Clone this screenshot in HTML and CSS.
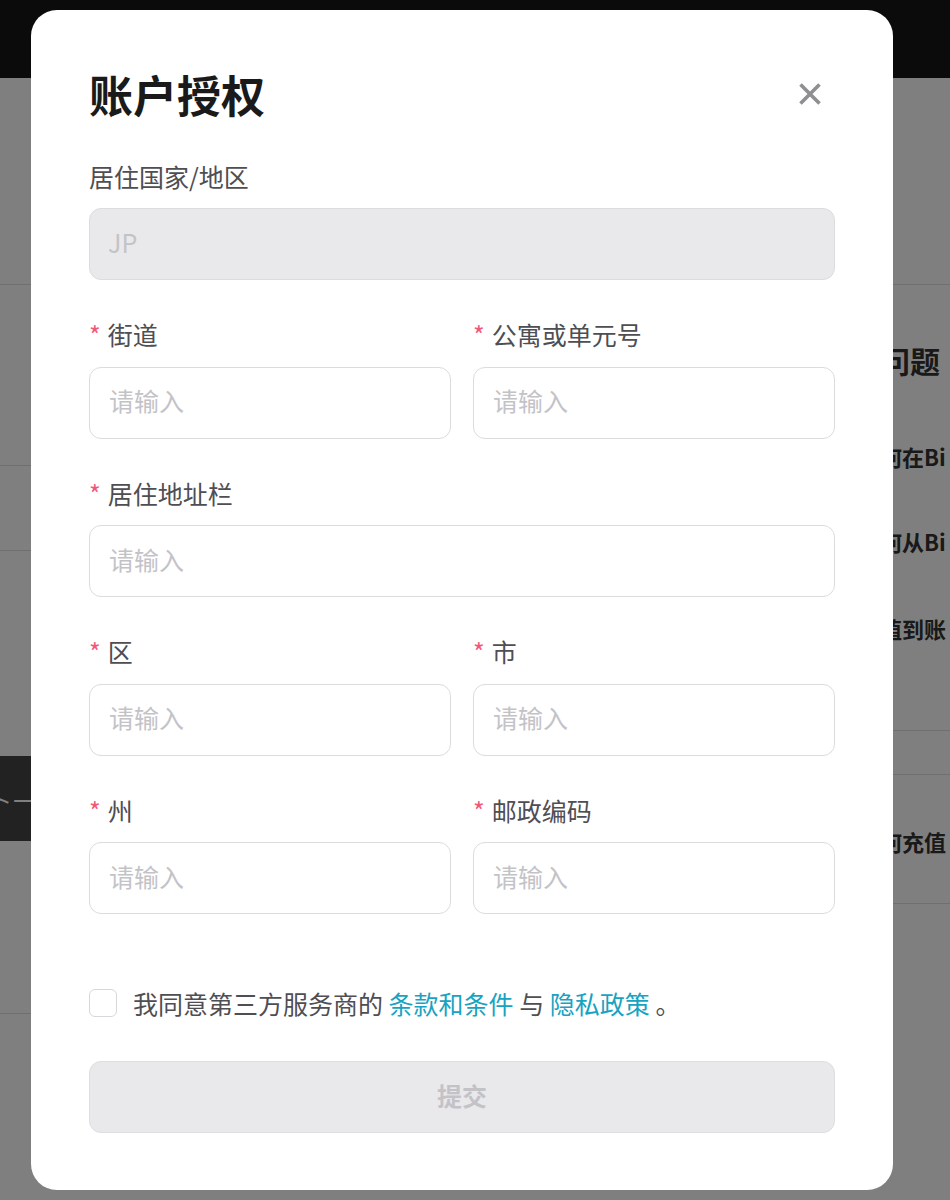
FILE: index.html
```html
<!DOCTYPE html>
<html lang="zh-CN">
<head>
<meta charset="utf-8">
<title>账户授权</title>
<link rel="stylesheet" href="styles.css">
</head>
<body>
<div class="page">
  <div class="topbar"></div>
  <div class="hero"></div>
  <div class="cols">
    <div class="left-col">
      <div class="lblock lblock-a"></div>
      <div class="lblock lblock-b"></div>
      <div class="dark-btn"><span class="dark-btn-text">トー</span></div>
      <div class="lblock lblock-c"></div>
    </div>
    <div class="right-col">
      <div class="faq-title">常见问题</div>
      <div class="faq-item faq-item-1">如何在Bi</div>
      <div class="faq-item faq-item-2">如何从Bi</div>
      <div class="faq-item faq-item-3">充值到账</div>
      <div class="faq-sep"></div>
      <div class="faq-item faq-item-4">如何充值</div>
    </div>
  </div>
</div>

<div class="overlay">
  <div class="modal">
    <div class="modal-head">
      <h2 class="modal-title">账户授权</h2>
      <button class="close" type="button" aria-label="关闭">
        <svg width="22" height="22" viewBox="0 0 22 22"><path d="M1.5 1.5 L20.5 20.5 M20.5 1.5 L1.5 20.5" stroke="#8e8e93" stroke-width="3.6" fill="none"/></svg>
      </button>
    </div>

    <div class="field">
      <label class="label">居住国家/地区</label>
      <input class="input" type="text" value="JP" disabled>
    </div>

    <div class="row">
      <div class="field">
        <label class="label"><span class="req">*</span>街道</label>
        <input class="input" type="text" placeholder="请输入">
      </div>
      <div class="field">
        <label class="label"><span class="req">*</span>公寓或单元号</label>
        <input class="input" type="text" placeholder="请输入">
      </div>
    </div>

    <div class="field">
      <label class="label"><span class="req">*</span>居住地址栏</label>
      <input class="input" type="text" placeholder="请输入">
    </div>

    <div class="row">
      <div class="field">
        <label class="label"><span class="req">*</span>区</label>
        <input class="input" type="text" placeholder="请输入">
      </div>
      <div class="field">
        <label class="label"><span class="req">*</span>市</label>
        <input class="input" type="text" placeholder="请输入">
      </div>
    </div>

    <div class="row row-last">
      <div class="field">
        <label class="label"><span class="req">*</span>州</label>
        <input class="input" type="text" placeholder="请输入">
      </div>
      <div class="field">
        <label class="label"><span class="req">*</span>邮政编码</label>
        <input class="input" type="text" placeholder="请输入">
      </div>
    </div>

    <div class="agree">
      <span class="checkbox"></span>
      <p class="agree-text">我同意第三方服务商的 <a class="link" href="#">条款和条件</a> 与 <a class="link" href="#">隐私政策</a> 。</p>
    </div>

    <button class="submit" type="button">提交</button>
  </div>
</div>
</body>
</html>
```

FILE: styles.css
```css
* { box-sizing: border-box; }

html, body {
  margin: 0;
  padding: 0;
  width: 950px;
  height: 1200px;
  overflow: hidden;
  background: #ffffff;
  font-family: "Noto Sans CJK SC", "Noto Sans", sans-serif;
}

/* ---------- background page ---------- */
.page {
  width: 950px;
  height: 1200px;
  overflow: hidden;
  background: #ffffff;
  color: #333333;
}

.topbar {
  height: 78px;
  background: #161616;
}

.hero {
  height: 207px;
  border-bottom: 1px solid #dedede;
}

.cols {
  display: flex;
  width: 950px;
  overflow: hidden;
}

.left-col {
  width: 820px;
  flex: none;
}

.lblock {
  border-bottom: 1px solid #dedede;
}

.lblock-a { height: 181px; }
.lblock-b { height: 85px; }
.lblock-c { height: 173px; }

.dark-btn {
  margin-top: 205px;
  height: 85px;
  width: 31px;
  background: #444444;
  display: flex;
  align-items: center;
  overflow: hidden;
}

.dark-btn-text {
  margin-left: -10px;
  color: #ffffff;
  font-size: 22px;
  line-height: 30px;
  white-space: nowrap;
}

.right-col {
  flex: none;
  width: 130px;
  overflow: hidden;
  color: #333333;
  font-weight: 700;
  white-space: nowrap;
}

.faq-title {
  margin-top: 55px;
  height: 40px;
  line-height: 40px;
  font-size: 30px;
}

.faq-item {
  height: 30px;
  line-height: 30px;
  font-size: 22px;
  padding-left: 38px;
}

.faq-item-1 { margin-top: 61px; }
.faq-item-2 { margin-top: 55px; }
.faq-item-3 { margin-top: 57px; }

.faq-sep {
  margin-top: 87px;
  height: 45px;
  border-top: 1px solid #dedede;
  border-bottom: 1px solid #dedede;
}

.faq-item-4 {
  height: auto;
  padding-top: 51px;
  padding-bottom: 47px;
  border-bottom: 1px solid #dedede;
}

/* ---------- overlay + modal ---------- */
.overlay {
  position: fixed;
  inset: 0;
  background: rgba(0, 0, 0, 0.5);
  display: flex;
  align-items: flex-start;
  padding: 10px 0 0 31px;
}

.modal {
  width: 862px;
  background: #ffffff;
  border-radius: 26px;
  padding: 54px 58px 57px;
}

.modal-head {
  display: flex;
  align-items: center;
  justify-content: space-between;
  margin-bottom: 34.5px;
}

.modal-title {
  margin: 0;
  font-size: 44px;
  line-height: 60px;
  font-weight: 700;
  color: #1a1a1a;
}

.close {
  width: 36px;
  height: 36px;
  margin-right: 7px;
  padding: 0;
  border: 0;
  background: transparent;
  display: flex;
  align-items: center;
  justify-content: center;
  cursor: pointer;
}

.field {
  display: flex;
  flex-direction: column;
  margin-bottom: 37px;
}

.row {
  display: grid;
  grid-template-columns: 1fr 1fr;
  column-gap: 22px;
}

.row-last .field {
  margin-bottom: 71px;
}

.label {
  font-size: 25px;
  line-height: 34px;
  color: #4e4e53;
  margin-bottom: 15.5px;
  white-space: nowrap;
}

.req {
  color: #f2577a;
  margin-right: 7px;
}

.input {
  height: 72px;
  width: 100%;
  border: 1px solid #dcdcdf;
  border-radius: 12px;
  padding: 0 19px 5px;
  font-family: inherit;
  font-size: 25px;
  color: #1a1a1a;
  background: #ffffff;
  outline: none;
}

.input::placeholder {
  color: #c3c3c7;
}

.input:disabled {
  background: #e9e9eb;
  color: #c3c3c7;
  -webkit-text-fill-color: #c3c3c7;
  opacity: 1;
  padding-left: 18px;
}

.agree {
  display: flex;
  align-items: center;
  gap: 16px;
  height: 36px;
  margin-bottom: 40px;
}

.checkbox {
  width: 28px;
  height: 28px;
  flex: none;
  border: 1px solid #d8d8dc;
  border-radius: 6px;
  background: #ffffff;
}

.agree-text {
  margin: 0;
  font-size: 25px;
  line-height: 36px;
  color: #4e4e53;
  white-space: nowrap;
}

.link {
  color: #17a3c1;
  text-decoration: none;
}

.submit {
  display: block;
  width: 100%;
  height: 72px;
  padding: 0 0 4px;
  border: 1px solid #dedee1;
  border-radius: 12px;
  background: #e9e9eb;
  color: #c3c3c7;
  font-family: inherit;
  font-size: 25px;
  font-weight: 700;
  cursor: default;
}
```
